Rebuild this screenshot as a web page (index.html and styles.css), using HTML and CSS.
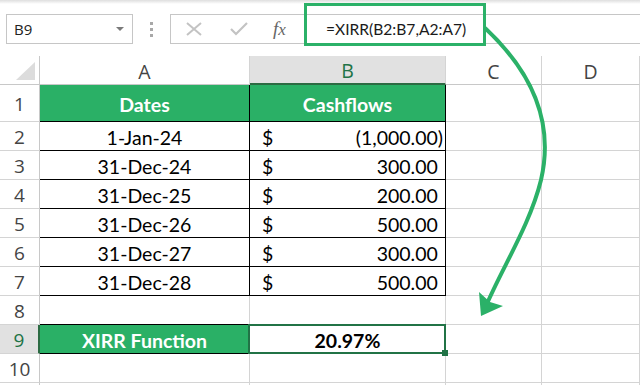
FILE: index.html
```html
<!DOCTYPE html>
<html lang="en">
<head>
    <meta charset="UTF-8">
    <title>XIRR Function</title>
    <link rel="stylesheet" href="styles.css">
</head>
<body>
    <!-- Name box + formula bar -->
    <div class="toolbar">
        <div class="namebox">
            <span>B9</span>
            <svg class="drop" width="8" height="5" viewBox="0 0 8 5"><path d="M0 0H8L4 4Z" fill="#7a7a7a"/></svg>
        </div>
        <div class="grip"><i></i><i></i><i></i></div>
        <div class="formula">
            <div class="fx-buttons">
                <svg width="18" height="14" viewBox="0 0 18 14"><path d="M2 1L16 13M16 1L2 13" stroke="#c3c3c3" stroke-width="2" fill="none"/></svg>
                <svg width="18" height="14" viewBox="0 0 18 14"><path d="M1 7L6 12L17 1" stroke="#c3c3c3" stroke-width="2.2" fill="none"/></svg>
                <span class="fx"><i>f</i><i>x</i></span>
            </div>
            <div class="input">=XIRR(B2:B7,A2:A7)</div>
        </div>
    </div>

    <!-- Worksheet -->
    <div class="sheet">
        <div class="corner"></div>
        <div class="colhead">A</div>
        <div class="colhead active">B</div>
        <div class="colhead">C</div>
        <div class="colhead">D</div>

        <div class="rowhead">1</div>
        <div class="cell boxed title">Dates</div>
        <div class="cell boxed title">Cashflows</div>
        <div class="cell"></div><div class="cell"></div>

        <div class="rowhead">2</div>
        <div class="cell boxed date">1-Jan-24</div>
        <div class="cell boxed money"><span>$</span><span>(1,000.00)</span></div>
        <div class="cell"></div><div class="cell"></div>

        <div class="rowhead">3</div>
        <div class="cell boxed date">31-Dec-24</div>
        <div class="cell boxed money"><span>$</span><span class="pos">300.00</span></div>
        <div class="cell"></div><div class="cell"></div>

        <div class="rowhead">4</div>
        <div class="cell boxed date">31-Dec-25</div>
        <div class="cell boxed money"><span>$</span><span class="pos">200.00</span></div>
        <div class="cell"></div><div class="cell"></div>

        <div class="rowhead">5</div>
        <div class="cell boxed date">31-Dec-26</div>
        <div class="cell boxed money"><span>$</span><span class="pos">500.00</span></div>
        <div class="cell"></div><div class="cell"></div>

        <div class="rowhead">6</div>
        <div class="cell boxed date">31-Dec-27</div>
        <div class="cell boxed money"><span>$</span><span class="pos">300.00</span></div>
        <div class="cell"></div><div class="cell"></div>

        <div class="rowhead">7</div>
        <div class="cell boxed date">31-Dec-28</div>
        <div class="cell boxed money"><span>$</span><span class="pos">500.00</span></div>
        <div class="cell"></div><div class="cell"></div>

        <div class="rowhead">8</div>
        <div class="cell dark-bottom"></div>
        <div class="cell"></div>
        <div class="cell"></div><div class="cell"></div>

        <div class="rowhead active">9</div>
        <div class="cell title dark-bottom">XIRR Function</div>
        <div class="cell selected result">20.97%</div>
        <div class="cell"></div><div class="cell"></div>

        <div class="rowhead">10</div>
        <div class="cell"></div><div class="cell"></div>
        <div class="cell"></div><div class="cell"></div>

        <div class="rowhead"></div>
        <div class="cell"></div><div class="cell"></div>
        <div class="cell"></div><div class="cell"></div>
    </div>

    <!-- Annotation: box around the formula and arrow to the result -->
    <div class="callout"></div>
    <svg class="arrow" width="640" height="385" viewBox="0 0 640 385">
        <path d="M485 28C530 70 555 120 541 180C530 225 502 268 486 306" stroke="#2bb168" stroke-width="4" fill="none"/>
        <path d="M481 316L479 292L490 302L503 306Z" fill="#2bb168"/>
    </svg>
</body>
</html>
```

FILE: styles.css
```css
* {
    margin: 0;
    padding: 0;
    box-sizing: border-box;
}

body {
    width: 640px;
    height: 385px;
    overflow: hidden;
    position: relative;
    background: #fff;
    font-family: Lato, sans-serif;
}

/* Formula bar strip */
.toolbar {
    height: 56px;
    display: flex;
    align-items: flex-start;
    padding: 14px 0 0 6px;
    background: linear-gradient(#dedede, #fff 4px);
}

.namebox {
    width: 127px;
    height: 30px;
    border: 1px solid #c6c6c6;
    background: #fff;
    display: flex;
    align-items: center;
    justify-content: space-between;
    padding: 0 8px 0 7px;
    font-family: "Open Sans", sans-serif;
    font-size: 15px;
    color: #222;
}

.grip {
    width: 37px;
    height: 30px;
    display: flex;
    flex-direction: column;
    align-items: center;
    justify-content: center;
    gap: 3px;
}

.grip i {
    width: 3px;
    height: 3px;
    background: #a8a8a8;
}

.formula {
    flex: 1;
    height: 30px;
    display: flex;
    align-items: center;
    border: 1px solid #c6c6c6;
    border-right: none;
    background: #fff;
}

.fx-buttons {
    width: 134px;
    display: flex;
    align-items: center;
    gap: 27px;
    padding-left: 14px;
}

.fx {
    font-family: "Liberation Serif", serif;
    font-size: 19px;
    color: #666;
    font-style: italic;
    margin-left: -2px;
}

.fx i:last-child {
    font-size: 17px;
}

.input {
    padding-left: 21px;
    font-size: 15.6px;
    color: #1a1a1a;
}

/* Worksheet grid */
.sheet {
    height: 329px;
    overflow: hidden;
    display: grid;
    grid-template-columns: 40px 210px 196px 96px 98px;
    grid-template-rows: 29px 37px repeat(9, 29px) 1fr;
}

.corner {
    border-right: 1px solid #c8c8c8;
    border-bottom: 1px solid #c8c8c8;
    position: relative;
}

.corner::after {
    content: "";
    position: absolute;
    right: 4px;
    bottom: 4px;
    border-left: 19px solid transparent;
    border-bottom: 18px solid #dcdcdc;
}

.colhead,
.rowhead {
    display: flex;
    align-items: center;
    justify-content: center;
    font-family: "Open Sans", sans-serif;
    font-size: 19.5px;
    color: #444;
    border-right: 1px solid #d4d4d4;
    border-bottom: 1px solid #c8c8c8;
    padding-top: 2px;
}

.rowhead {
    border-right-color: #c8c8c8;
    border-bottom-color: #d4d4d4;
    font-size: 19px;
}

.colhead.active,
.rowhead.active {
    background: #e1e1e1;
    color: #217346;
}

.colhead.active {
    border-bottom: 2px solid #2c6b43;
}

.rowhead.active {
    border-right: 2px solid #2c6b43;
}

.cell {
    border-right: 1px solid #d4d4d4;
    border-bottom: 1px solid #d4d4d4;
    display: flex;
    align-items: center;
    padding-top: 2px;
    font-size: 19.5px;
    color: #000;
}

.cell.boxed {
    border-right-color: #000;
    border-bottom-color: #000;
}

.cell.dark-bottom {
    border-bottom-color: #000;
}

.title {
    background: #2ab066;
    color: #fff;
    font-weight: bold;
    justify-content: center;
}

.date {
    justify-content: center;
}

.money {
    justify-content: space-between;
    padding: 2px 2px 0 12px;
}

/* Accounting format keeps room for the closing paren */
.pos::after {
    content: ")";
    visibility: hidden;
}

.result {
    justify-content: center;
    font-weight: bold;
}

.selected {
    position: relative;
}

.selected::after {
    content: "";
    position: absolute;
    left: -2px;
    top: -1px;
    right: -1px;
    bottom: -1px;
    border: 2px solid #217346;
}

.selected::before {
    content: "";
    position: absolute;
    right: -3px;
    bottom: -3px;
    width: 6px;
    height: 6px;
    background: #217346;
    z-index: 1;
}

/* Annotation overlay */
.callout {
    position: absolute;
    left: 304px;
    top: 3px;
    width: 182px;
    height: 43px;
    border: 3px solid #2bb168;
}

.arrow {
    position: absolute;
    left: 0;
    top: 0;
    pointer-events: none;
}
```
